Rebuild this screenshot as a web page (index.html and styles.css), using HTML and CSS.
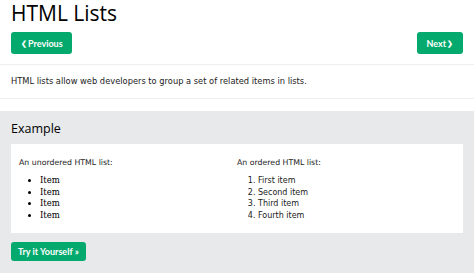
FILE: index.html
```html
<!DOCTYPE html>
<html lang="en">
<head>
    <meta charset="UTF-8">
    <title>HTML Lists</title>
    <link rel="stylesheet" href="styles.css">
</head>
<body>
    <div class="page">
        <h1 class="title">HTML Lists</h1>
        <div class="nav">
            <a class="btn" href="#"><span class="chev">&#10094;</span> Previous</a>
            <a class="btn" href="#">Next <span class="chev">&#10095;</span></a>
        </div>
    </div>
    <hr class="rule">
    <p class="intro">HTML lists allow web developers to group a set of related items in lists.</p>
    <hr class="rule">

    <div class="example">
        <h2 class="example-title">Example</h2>
        <div class="example-body">
            <div class="col">
                <p class="col-label">An unordered HTML list:</p>
                <ul class="bullets">
                    <li>Item</li>
                    <li>Item</li>
                    <li>Item</li>
                    <li>Item</li>
                </ul>
            </div>
            <div class="col">
                <p class="col-label">An ordered HTML list:</p>
                <ol class="numbers">
                    <li>First item</li>
                    <li>Second item</li>
                    <li>Third item</li>
                    <li>Fourth item</li>
                </ol>
            </div>
        </div>
        <a class="btn try" href="#">Try it Yourself &raquo;</a>
    </div>
</body>
</html>
```

FILE: styles.css
```css
body {
    margin: 0;
    padding: 0;
    background: #fff;
    color: #000;
    font-family: 'DejaVu Sans', Verdana, sans-serif;
}
.page {
    padding: 0 11px;
}
.title {
    font-family: 'Open Sans', sans-serif;
    font-weight: 400;
    font-size: 21px;
    line-height: 24px;
    margin: 1px 0 0 0;
}
.nav {
    display: flex;
    justify-content: space-between;
    margin-top: 7px;
}
.btn {
    display: inline-flex;
    align-items: center;
    height: 22px;
    padding: 0 9px;
    background: #04aa6d;
    color: #fff;
    border-radius: 3px;
    font-family: 'Lato', sans-serif;
    font-weight: 700;
    font-size: 9px;
    text-decoration: none;
}
.chev {
    font-size: 7px;
    margin: 0 1px;
}
.rule {
    border: 0;
    border-top: 1px solid #eee;
    margin: 10px 0 0 0;
}
.intro {
    margin: 0;
    padding: 0 11px;
    height: 33px;
    line-height: 33px;
    font-size: 8.3px;
    color: #222;
}
.rule + .intro + .rule {
    margin: 0;
}
.example {
    margin-top: 12px;
    background: #e7e9eb;
    padding: 10px 11px 12px;
}
.example-title {
    font-family: 'Open Sans', sans-serif;
    font-weight: 400;
    font-size: 12.5px;
    line-height: 16px;
    margin: 0 0 7px 0;
}
.example-body {
    display: grid;
    grid-template-columns: 218px 1fr;
    background: #fff;
    padding: 14px 8px 0;
    height: 75px;
}
.col-label {
    margin: 0 0 8px 0;
    font-size: 7.8px;
    color: #222;
}
.bullets, .numbers {
    margin: 0;
    padding-left: 21px;
    font-size: 8px;
    line-height: 11.5px;
}
.bullets {
    font-family: 'DejaVu Serif', serif;
    font-size: 8.5px;
}
.numbers {
    color: #222;
}
.try {
    margin-top: 9px;
    height: 19px;
    padding: 0 7px;
}
```
